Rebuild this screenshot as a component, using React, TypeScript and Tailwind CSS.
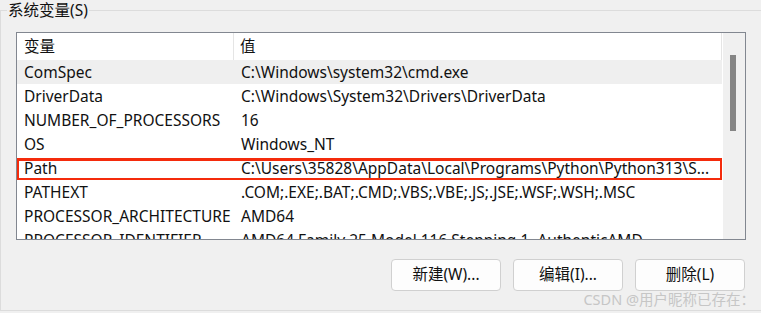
import React from "react";

const rows: [string, string][] = [
  ["ComSpec", "C:\\Windows\\system32\\cmd.exe"],
  ["DriverData", "C:\\Windows\\System32\\Drivers\\DriverData"],
  ["NUMBER_OF_PROCESSORS", "16"],
  ["OS", "Windows_NT"],
  ["Path", "C:\\Users\\35828\\AppData\\Local\\Programs\\Python\\Python313\\S..."],
  ["PATHEXT", ".COM;.EXE;.BAT;.CMD;.VBS;.VBE;.JS;.JSE;.WSF;.WSH;.MSC"],
  ["PROCESSOR_ARCHITECTURE", "AMD64"],
  ["PROCESSOR_IDENTIFIER", "AMD64 Family 25 Model 116 Stepping 1, AuthenticAMD"],
];

const font = { fontFamily: '"Noto Sans", "Noto Sans CJK SC", sans-serif' };

export default function App() {
  return (
    <div
      className="relative w-[761px] h-[313px] bg-[#f0f0f0] overflow-hidden text-[15.5px] text-[#111]"
      style={font}
    >
      <div className="relative mt-[10px] h-[301px] border-l border-t border-b border-[#dcdcdc] pl-[15px] pt-[21px]">
        <div className="absolute left-[6px] top-[-11px] bg-[#f0f0f0] px-[1px] leading-[20px]">
          系统变量(S)
        </div>
        <div className="flex w-[730px] h-[208px] border border-[#828790] bg-white">
          <div className="w-[705px] h-full overflow-hidden">
            <div className="flex h-[27px] items-center bg-white">
              <div className="w-[217px] h-full flex items-center pl-[7px] border-r border-[#e5e5e5]">变量</div>
              <div className="flex-1 h-full flex items-center pl-[6px] border-r border-[#e5e5e5]">值</div>
            </div>
            {rows.map(([k, v], i) => (
              <div
                key={k}
                className={`relative flex h-[24px] items-center whitespace-nowrap leading-[24px] ${i === 0 ? "bg-[#efefef]" : "bg-white"}`}
              >
                <div className="w-[217px] pl-[7px] overflow-hidden">{k}</div>
                <div className="flex-1 pl-[7px] overflow-hidden">{v}</div>
                {k === "Path" && (
                  <div className="absolute left-[-1px] right-[-1px] top-[2px] h-[23px] border-[3px] border-[#f42b0c]" />
                )}
              </div>
            ))}
          </div>
          <div className="w-[1px] h-full bg-white" />
          <div className="flex-1 h-full bg-[#f0f0f0] pt-[22px] pl-[7px]">
            <div className="w-[6px] h-[76px] bg-[#858585]" />
          </div>
        </div>
        <div className="flex justify-end gap-[12px] mt-[19px] w-[729px]">
          {["新建(W)...", "编辑(I)...", "删除(L)"].map((t) => (
            <button
              key={t}
              className="w-[110px] h-[32px] rounded-[4px] border border-[#d0d0d0] bg-[#fdfdfd] flex items-center justify-center"
            >
              {t}
            </button>
          ))}
        </div>
      </div>
      <div className="absolute right-[6px] top-[290px] text-[14.5px] leading-[18px] text-[#c6c6c6] whitespace-nowrap">
        CSDN @用户昵称已存在：
      </div>
    </div>
  );
}
